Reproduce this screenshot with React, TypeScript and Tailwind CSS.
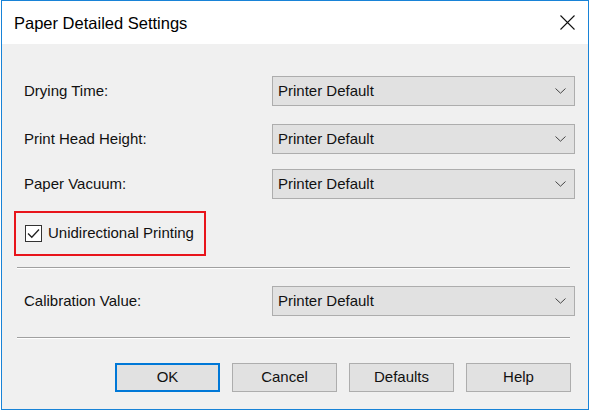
const font = { fontFamily: '"Liberation Sans", Arial, sans-serif' };

function Combo() {
  return (
    <div className="flex h-[30px] w-[303px] items-center justify-between border border-[#adadad] bg-[#e1e1e1] pl-[5px] pr-[7px] text-[15px] text-[#111]">
      <span className="whitespace-nowrap">Printer Default</span>
      <svg width="11" height="6" viewBox="0 0 11 6" className="mr-[1px]">
        <path d="M0.5 0.5 L5.5 5.2 L10.5 0.5" fill="none" stroke="#444" strokeWidth="1" />
      </svg>
    </div>
  );
}

function Row({ label, className }: { label: string; className: string }) {
  return (
    <div className={`flex items-center justify-between pl-[22px] pr-[13px] ${className}`}>
      <span className="mt-[1px] whitespace-nowrap text-[15px] text-[#111]">{label}</span>
      <Combo />
    </div>
  );
}

function Separator({ className }: { className: string }) {
  return <div className={`ml-[15px] mr-[18px] border-t border-b border-t-[#a0a0a0] border-b-white ${className}`} />;
}

function DialogButton({ label, primary }: { label: string; primary?: boolean }) {
  return (
    <button
      className={`flex h-[29px] w-[105px] items-center justify-center bg-[#e1e1e1] text-[15px] text-[#111] ${
        primary ? 'border-2 border-[#0078d7]' : 'border border-[#adadad]'
      }`}
    >
      {label}
    </button>
  );
}

export default function App() {
  return (
    <div className="h-[412px] w-[590px] bg-white" style={font}>
      <div className="ml-[1px] flex h-[410px] w-[588px] flex-col border border-[#1883d7] bg-[#f0f0f0]">
        <div className="flex h-[43px] items-center justify-between bg-white pl-[12px] pr-[13px]">
          <span className="mt-[1px] whitespace-nowrap text-[16.5px] text-black">Paper Detailed Settings</span>
          <svg width="15" height="15" viewBox="0 0 15 15">
            <path d="M0.5 0.5 L14.5 14.5 M14.5 0.5 L0.5 14.5" stroke="#111" strokeWidth="1.1" />
          </svg>
        </div>

        <Row label="Drying Time:" className="mt-[32px]" />
        <Row label="Print Head Height:" className="mt-[18px]" />
        <Row label="Paper Vacuum:" className="mt-[15px]" />

        <div className="ml-[12px] mt-[12px] flex h-[45px] w-[192px] items-center gap-[6px] border-2 border-[#e8141b] pl-[9px]">
          <div className="flex h-[17px] w-[17px] items-center justify-center border border-[#333] bg-white">
            <svg width="13" height="11" viewBox="0 0 13 11">
              <path d="M1 5.5 L4.8 9.3 L12 1.5" fill="none" stroke="#222" strokeWidth="1.3" />
            </svg>
          </div>
          <span className="whitespace-nowrap text-[15px] text-[#111]">Unidirectional Printing</span>
        </div>

        <Separator className="mt-[11px]" />
        <Row label="Calibration Value:" className="mt-[17px]" />
        <Separator className="mt-[21px]" />

        <div className="ml-[113px] mt-[24px] flex gap-[12px]">
          <DialogButton label="OK" primary />
          <DialogButton label="Cancel" />
          <DialogButton label="Defaults" />
          <DialogButton label="Help" />
        </div>
      </div>
    </div>
  );
}
